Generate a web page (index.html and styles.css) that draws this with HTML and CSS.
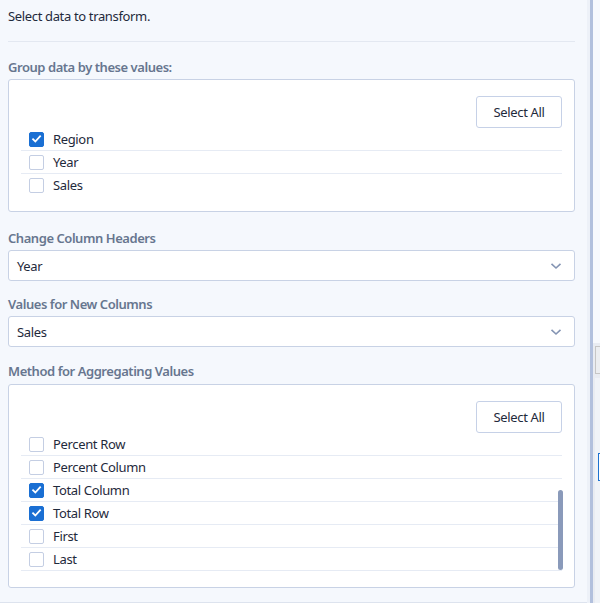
FILE: index.html
```html
<!DOCTYPE html>
<html>
<head>
<meta charset="utf-8">
<link rel="stylesheet" href="styles.css">
</head>
<body>
<div class="page">
  <div class="main">
    <p class="intro">Select data to transform.</p>
    <hr class="divider">

    <div class="field">
      <div class="label">Group data by these values:</div>
      <div class="box">
        <div class="box-head"><button class="btn">Select All</button></div>
        <div class="list">
          <div class="row"><span class="cb checked"><svg viewBox="0 0 14 14"><path d="M3.2 7.2 L5.9 9.8 L10.9 4.4" /></svg></span><span class="txt">Region</span></div>
          <div class="row"><span class="cb"></span><span class="txt">Year</span></div>
          <div class="row last"><span class="cb"></span><span class="txt">Sales</span></div>
        </div>
      </div>
    </div>

    <div class="field after-box">
      <div class="label">Change Column Headers</div>
      <div class="select"><span>Year</span><svg class="chev" viewBox="0 0 12 8"><path d="M1.5 1.8 L6 6 L10.5 1.8" /></svg></div>
    </div>

    <div class="field after-select">
      <div class="label">Values for New Columns</div>
      <div class="select"><span>Sales</span><svg class="chev" viewBox="0 0 12 8"><path d="M1.5 1.8 L6 6 L10.5 1.8" /></svg></div>
    </div>

    <div class="field after-select method">
      <div class="label">Method for Aggregating Values</div>
      <div class="box">
        <div class="box-head"><button class="btn">Select All</button></div>
        <div class="list scroll">
          <div class="row"><span class="cb"></span><span class="txt">Percent Row</span></div>
          <div class="row"><span class="cb"></span><span class="txt">Percent Column</span></div>
          <div class="row"><span class="cb checked"><svg viewBox="0 0 14 14"><path d="M3.2 7.2 L5.9 9.8 L10.9 4.4" /></svg></span><span class="txt">Total Column</span></div>
          <div class="row"><span class="cb checked"><svg viewBox="0 0 14 14"><path d="M3.2 7.2 L5.9 9.8 L10.9 4.4" /></svg></span><span class="txt">Total Row</span></div>
          <div class="row"><span class="cb"></span><span class="txt">First</span></div>
          <div class="row"><span class="cb"></span><span class="txt">Last</span></div>
          <div class="thumb"></div>
        </div>
      </div>
    </div>
  </div>
  <div class="gutter"></div>
  <div class="splitter"></div>
  <div class="side">
    <div class="side-top"></div>
    <div class="side-panel">
      <div class="side-box"></div>
      <div class="side-inner">
        <div class="side-blue"></div>
      </div>
    </div>
  </div>
</div>
</body>
</html>
```
FILE: styles.css
```css
html, body {
  margin: 0;
  padding: 0;
  background: #f5f8fd;
}
body {
  font-family: "Noto Sans", "Open Sans", sans-serif;
  font-size: 13px;
  letter-spacing: -0.35px;
  color: #1f2a3c;
  width: 600px;
  height: 603px;
  overflow: hidden;
}
.page {
  display: flex;
  height: 603px;
}
.main {
  width: 567px;
  padding: 0 12px 0 8px;
  height: 602px;
  border-bottom: 1px solid #dde3ee;
  flex: none;
}
.intro {
  margin: 0;
  padding-top: 6px;
  line-height: 20px;
  height: 20px;
}
.divider {
  border: 0;
  border-top: 1px solid #e3e8f1;
  margin: 15px 0 0 0;
  height: 0;
}
.field {
  margin-top: 15px;
}
.field.after-box {
  margin-top: 16px;
}
.field.after-select {
  margin-top: 13px;
}
.field.method {
  margin-top: 14px;
}
.field.method .label {
  margin-bottom: 3px;
}
.field.method .box {
  padding-bottom: 16px;
}
.label {
  font-weight: 600;
  letter-spacing: -0.45px;
  color: #67768f;
  line-height: 20px;
  height: 20px;
  margin-bottom: 2px;
}
.box {
  background: #fff;
  border: 1px solid #c8d2e5;
  border-radius: 3px;
  padding: 16px 12px 15px 12px;
}
.box-head {
  display: flex;
  justify-content: flex-end;
}
.btn {
  font: inherit;
  letter-spacing: inherit;
  color: #1f2a3c;
  background: #fff;
  border: 1px solid #c6d1e7;
  border-radius: 3px;
  width: 86px;
  height: 32px;
  padding: 0;
  margin-right: 0;
}
.list {
  position: relative;
}
.row {
  display: flex;
  align-items: center;
  height: 22px;
  border-bottom: 1px solid #e6ebf4;
}
.row.last {
  border-bottom: 0;
}
.cb {
  box-sizing: border-box;
  width: 15px;
  height: 15px;
  margin-left: 8px;
  margin-right: 9px;
  border: 1.5px solid #c4cee3;
  border-radius: 2px;
  background: #fff;
  display: flex;
}
.cb svg {
  width: 15px;
  height: 15px;
  margin: -1.5px;
}
.cb.checked {
  background: #1a6fd3;
  border-color: #1a6fd3;
}
.cb path {
  fill: none;
  stroke: #fff;
  stroke-width: 1.7;
}
.txt {
  line-height: 20px;
}
.select {
  box-sizing: border-box;
  height: 31px;
  background: #fff;
  border: 1px solid #c8d2e5;
  border-radius: 3px;
  display: flex;
  align-items: center;
  justify-content: space-between;
  padding: 0 12px 0 8px;
}
.chev {
  width: 12px;
  height: 8px;
}
.chev path {
  fill: none;
  stroke: #8494b3;
  stroke-width: 1.6;
}
.thumb {
  position: absolute;
  right: -1px;
  bottom: 1px;
  width: 5px;
  height: 80px;
  border-radius: 3px;
  background: #8a9aba;
}
.gutter {
  width: 3px;
  background: #edf1f8;
  flex: none;
}
.splitter {
  width: 3px;
  background: #b2c0dd;
  flex: none;
}
.side {
  flex: 1;
  display: flex;
  flex-direction: column;
  background: #f7f9fd;
}
.side-top {
  height: 412px;
}
.side-panel {
  flex: 1;
  background: #e9ecf2;
  padding-left: 2px;
}
.side-box {
  height: 26px;
  margin-top: 3px;
  border: 1px solid #c6c6c6;
  border-right: 0;
  background: #eceef1;
}
.side-inner {
  margin-top: 4px;
  padding-top: 75px;
  padding-left: 3px;
  background: #f0f3f8;
  height: 150px;
}
.side-blue {
  height: 26px;
  border: 1px solid #1e73d0;
  border-right: 0;
  background: #fff;
}
```
